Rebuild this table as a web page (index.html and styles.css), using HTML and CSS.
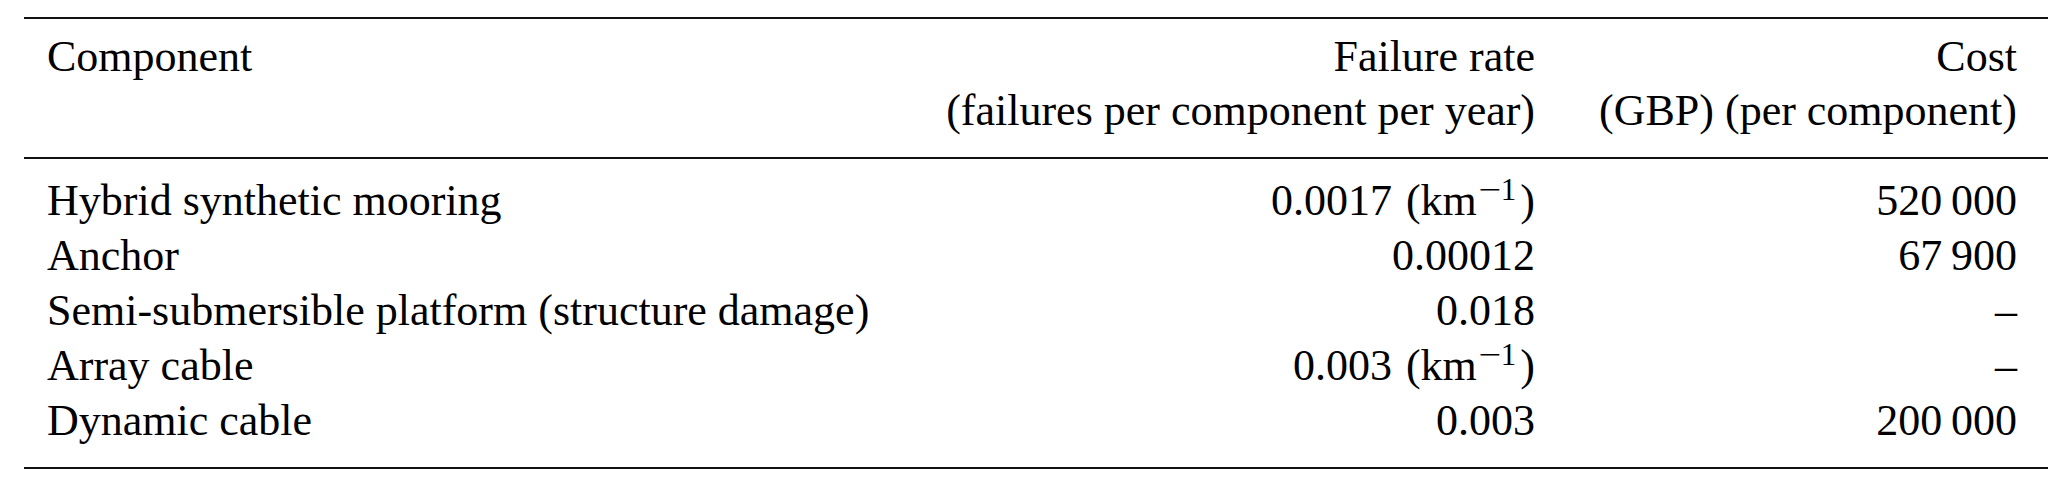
FILE: index.html
```html
<!DOCTYPE html>
<html lang="en">
<head>
<meta charset="utf-8">
<title>Component failure rates and costs</title>
<link rel="stylesheet" href="styles.css">
</head>
<body>
<table class="tbl">
  <thead>
    <tr>
      <th class="c1">Component</th>
      <th class="c2">Failure rate<br>(failures per component per year)</th>
      <th class="c3">Cost<br>(GBP) (per component)</th>
    </tr>
  </thead>
  <tbody>
    <tr class="first">
      <td class="c1">Hybrid synthetic mooring</td>
      <td class="c2">0.0017 <span class="unit">(km<sup class="sup"><span class="minus">−</span>1</sup>)</span></td>
      <td class="c3">520&#8201;000</td>
    </tr>
    <tr>
      <td class="c1">Anchor</td>
      <td class="c2">0.00012</td>
      <td class="c3">67&#8201;900</td>
    </tr>
    <tr>
      <td class="c1">Semi-submersible platform (structure damage)</td>
      <td class="c2">0.018</td>
      <td class="c3">–</td>
    </tr>
    <tr>
      <td class="c1">Array cable</td>
      <td class="c2">0.003 <span class="unit">(km<sup class="sup"><span class="minus">−</span>1</sup>)</span></td>
      <td class="c3">–</td>
    </tr>
    <tr class="last">
      <td class="c1">Dynamic cable</td>
      <td class="c2">0.003</td>
      <td class="c3">200&#8201;000</td>
    </tr>
  </tbody>
</table>
</body>
</html>
```
FILE: styles.css
```css
html, body {
  margin: 0;
  padding: 0;
  background: #ffffff;
}

body {
  font-family: "Liberation Serif", "Times New Roman", serif;
  color: #000000;
  font-size: 44px;
}

.tbl {
  margin: 17px 0 0 24px;
  width: 2024px;
  table-layout: fixed;
  border-collapse: separate;
  border-spacing: 0;
}

.tbl th,
.tbl td {
  box-sizing: border-box;
  padding: 0 31px;
  font-weight: normal;
  white-space: nowrap;
  vertical-align: top;
}

.tbl th {
  line-height: 54px;
  padding-top: 11px;
  padding-bottom: 19px;
  border-top: 2px solid #111;
  border-bottom: 2px solid #111;
}

.tbl td {
  line-height: 55px;
}

.tbl .c1 {
  width: 891px;
  padding-left: 23px;
  text-align: left;
}

.tbl .c2 {
  width: 651px;
  text-align: right;
}

.tbl .c3 {
  width: 482px;
  text-align: right;
}

.tbl tr.first td {
  padding-top: 14px;
}

.tbl tr.last td {
  padding-bottom: 19px;
  border-bottom: 2px solid #111;
}

.unit {
  margin-left: 3px;
}

.sup {
  font-size: 31px;
  line-height: 0;
  vertical-align: 15px;
  margin-left: 2px;
  margin-right: 4px;
}

.minus {
  display: inline-block;
  width: 22px;
  text-align: center;
  transform: scaleX(1.3);
}
```
